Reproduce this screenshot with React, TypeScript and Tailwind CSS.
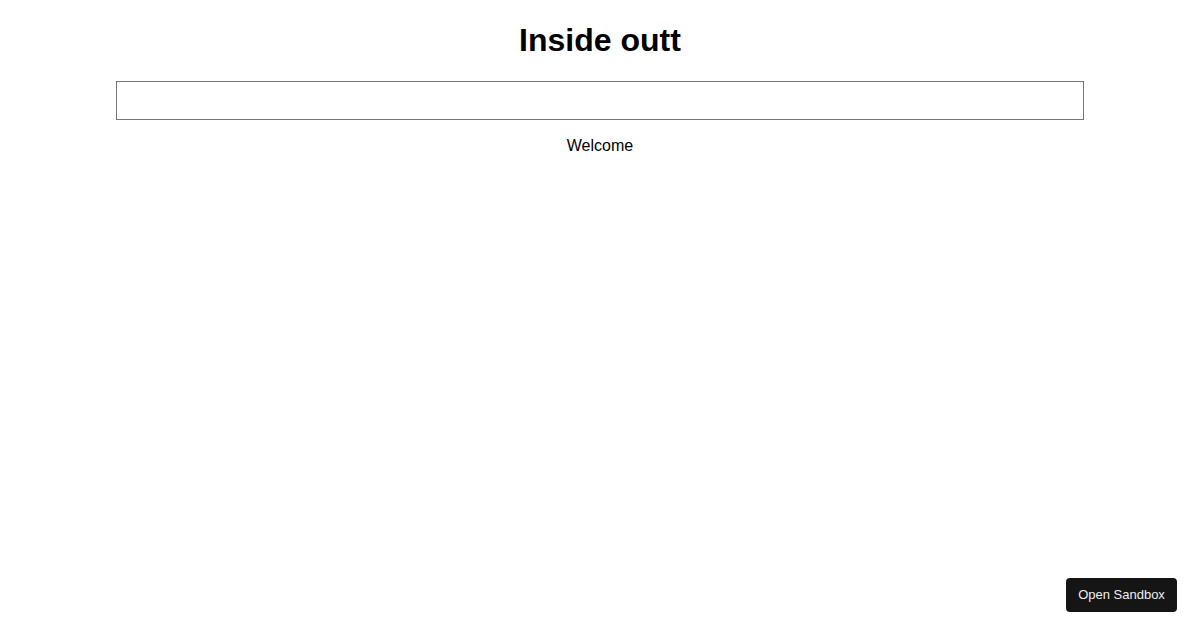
export default function App() {
  return (
    <div className="min-h-[630px] bg-white text-black" style={{ fontFamily: '"Liberation Sans", Arial, sans-serif' }}>
      <div className="flex flex-col items-center text-center">
        <h1 className="mt-[22px] text-[32px] leading-[37px] font-bold">Inside outt</h1>
        <input
          type="text"
          className="mt-[22px] w-[968px] h-[39px] border border-[#767676] bg-white outline-none"
        />
        <p className="mt-[17px] text-base leading-[18px]">Welcome</p>
      </div>
      <button
        className="fixed right-[23px] bottom-[18px] w-[111px] h-[34px] rounded-[4px] bg-[#151515] text-[13px] text-[#eeeeee]"
        style={{ fontFamily: '"Liberation Sans", Arial, sans-serif' }}
      >
        Open Sandbox
      </button>
    </div>
  );
}
